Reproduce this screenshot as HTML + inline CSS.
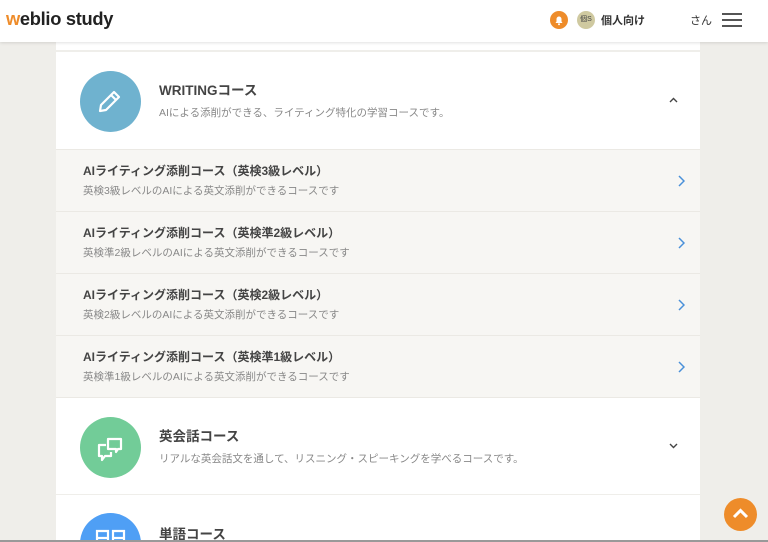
<!DOCTYPE html>
<html style="width:768px;height:542px;overflow:hidden"><head><meta charset="utf-8"><style>
*{margin:0;padding:0;box-sizing:border-box}
body{width:768px;height:542px;overflow:hidden;background:#efeeea;font-family:"Liberation Sans","Noto Sans CJK JP",sans-serif;color:#444;position:relative}
.hdr{position:absolute;left:0;top:0;width:768px;height:42px;background:#fff;box-shadow:0 1px 3px rgba(0,0,0,.12);z-index:2}
.logo{position:absolute;left:6px;top:8px;font-size:18.3px;font-weight:bold;color:#222;letter-spacing:-.3px}
.logo span{color:#ee8c2a}
.card{position:absolute;left:56px;width:644px;background:#fff;overflow:hidden}
.sec{height:97px;position:relative}
.ic{position:absolute;left:24px;top:19px;width:61px;height:61px;border-radius:50%}
.t{position:absolute;left:103px;top:27px;font-size:13.5px;font-weight:bold;color:#444}
.d{position:absolute;left:103px;top:53px;font-size:10.5px;color:#888}
.car{position:absolute;left:613px;top:45px}
.sub{height:62px;background:#f7f6f3;border-top:1px solid #ebe9e4;position:relative}
.sub .a{position:absolute;left:27px;top:12px;font-size:12px;font-weight:bold;color:#444}
.sub .b{position:absolute;left:27px;top:33px;font-size:10.5px;color:#888}
.sub svg{position:absolute;left:621px;top:25px}
</style></head><body>
<div class="hdr">
<div class="logo"><span>w</span>eblio study</div>
<div style="position:absolute;left:550px;top:11px;width:18px;height:18px;border-radius:50%;background:#ee8c2a"><svg width="18" height="18" viewBox="0 0 18 18"><path d="M5.5 12h7l-1-1.5V8a2.5 2.5 0 0 0-5 0v2.5z" fill="#fff"/><circle cx="9" cy="13.3" r="1" fill="#fff"/></svg></div>
<div style="position:absolute;left:577px;top:11px;width:18px;height:18px;border-radius:50%;background:#cfc9a0;font-size:7px;line-height:18px;text-align:center;color:#444">個S</div>
<div style="position:absolute;left:601px;top:12px;font-size:11px;font-weight:bold;color:#333">個人向け</div>
<div style="position:absolute;left:690px;top:12px;font-size:11px;color:#333">さん</div>
<div style="position:absolute;left:722px;top:13px;width:20px;height:2px;background:#555;box-shadow:0 6px 0 #555,0 12px 0 #555"></div>
</div>
<div class="card" style="top:40px;height:10px"></div>
<div class="card" style="top:52px">
<div class="sec"><div class="ic" style="background:#6fb2cf"><svg width="61" height="61" viewBox="0 0 61 61"><path d="M34 21l5 5-13 13-6 1 1-6z M31 24l5 5" fill="none" stroke="#fff" stroke-width="2.2" stroke-linejoin="round"/></svg></div>
<div class="t">WRITINGコース</div><div class="d">AIによる添削ができる、ライティング特化の学習コースです。</div><svg class="car" width="9" height="6"><path d="M1 5l3.5-3.5L8 5" fill="none" stroke="#444" stroke-width="1.4"/></svg></div>
<div class="sub"><div class="a">AIライティング添削コース（英検3級レベル）</div><div class="b">英検3級レベルのAIによる英文添削ができるコースです</div><svg width="8" height="12"><path d="M2 1l5 5-5 5" fill="none" stroke="#4a90d9" stroke-width="1.5"/></svg></div>
<div class="sub"><div class="a">AIライティング添削コース（英検準2級レベル）</div><div class="b">英検準2級レベルのAIによる英文添削ができるコースです</div><svg width="8" height="12"><path d="M2 1l5 5-5 5" fill="none" stroke="#4a90d9" stroke-width="1.5"/></svg></div>
<div class="sub"><div class="a">AIライティング添削コース（英検2級レベル）</div><div class="b">英検2級レベルのAIによる英文添削ができるコースです</div><svg width="8" height="12"><path d="M2 1l5 5-5 5" fill="none" stroke="#4a90d9" stroke-width="1.5"/></svg></div>
<div class="sub"><div class="a">AIライティング添削コース（英検準1級レベル）</div><div class="b">英検準1級レベルのAIによる英文添削ができるコースです</div><svg width="8" height="12"><path d="M2 1l5 5-5 5" fill="none" stroke="#4a90d9" stroke-width="1.5"/></svg></div>
<div class="sec" style="border-top:1px solid #ebe9e4"><div class="ic" style="background:#72cc98"><svg width="61" height="61" viewBox="0 0 61 61"><path d="M28 22h13v10h-3l-2 3v-3h-8z M26 28h-7v11h3v4l3-4h6v-4" fill="none" stroke="#fff" stroke-width="2.2" stroke-linejoin="round"/></svg></div>
<div class="t">英会話コース</div><div class="d">リアルな英会話文を通して、リスニング・スピーキングを学べるコースです。</div><svg class="car" width="9" height="6"><path d="M1 1l3.5 3.5L8 1" fill="none" stroke="#444" stroke-width="1.4"/></svg></div>
</div>
<div class="card" style="top:495px;height:45px">
<div class="ic" style="background:#4f9ff5;top:18px"><svg width="61" height="61" viewBox="0 0 61 61"><path d="M17 18h11v14h-11z M33 18h11v14h-11z M17 25h11 M33 25h11" fill="none" stroke="#fff" stroke-width="2.2"/></svg></div>
<div class="t" style="top:28px">単語コース</div></div>
<div style="position:absolute;left:0;top:540px;width:768px;height:2px;background:#999"></div>
<div style="position:absolute;left:724px;top:498px;width:33px;height:33px;border-radius:50%;background:#ee8c2a"><svg width="33" height="33"><path d="M10 19l6.5-6.5 6.5 6.5" fill="none" stroke="#fff" stroke-width="3"/></svg></div>
</body></html>
